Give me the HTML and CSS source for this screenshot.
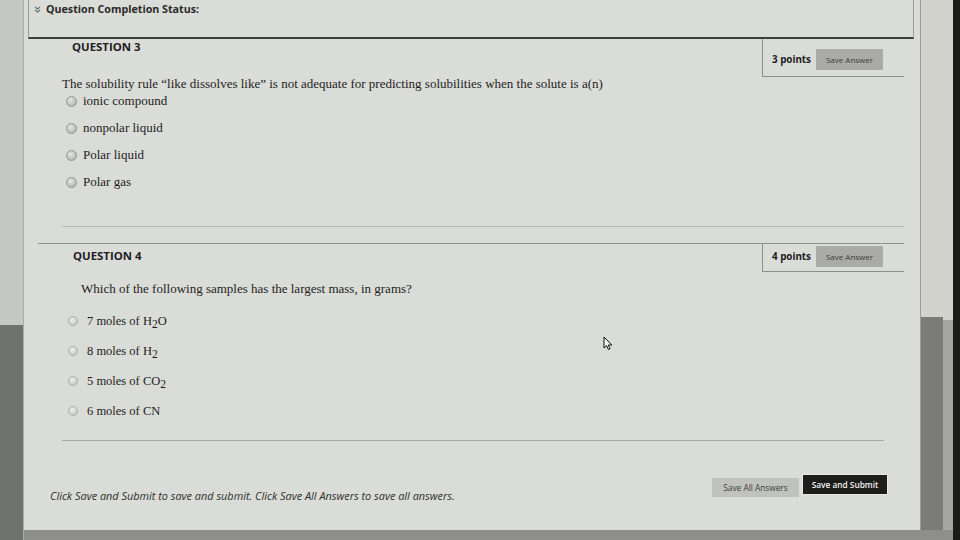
FILE: index.html
```html
<!DOCTYPE html>
<html>
<head>
<meta charset="utf-8">
<link rel="stylesheet" href="styles.css">
</head>
<body>
<div class="screen">
  <div class="side-left"></div>
  <div class="page">
    <div class="status">
      <svg class="chev" width="7" height="7" viewBox="0 0 7 7"><path d="M1 1 L3.5 3 L6 1 M1 4 L3.5 6 L6 4" fill="none" stroke="#6d6f6c" stroke-width="1.1"/></svg>
      <span>Question Completion Status:</span>
    </div>

    <section class="q3">
      <div class="head">
        <h2 class="qtitle">QUESTION 3</h2>
        <div class="pts">
          <span class="pts-label">3 points</span>
          <button class="save">Save Answer</button>
        </div>
      </div>
      <p class="qtext">The solubility rule “like dissolves like” is not adequate for predicting solubilities when the solute is a(n)</p>
      <ul class="opts">
        <li><span class="radio"></span><span class="lbl">ionic compound</span></li>
        <li><span class="radio"></span><span class="lbl">nonpolar liquid</span></li>
        <li><span class="radio"></span><span class="lbl">Polar liquid</span></li>
        <li><span class="radio"></span><span class="lbl">Polar gas</span></li>
      </ul>
    </section>

    <div class="sep-light"></div>

    <section class="q4">
      <div class="head">
        <h2 class="qtitle">QUESTION 4</h2>
        <div class="pts">
          <span class="pts-label">4 points</span>
          <button class="save">Save Answer</button>
        </div>
      </div>
      <p class="qtext">Which of the following samples has the largest mass, in grams?</p>
      <ul class="opts">
        <li><span class="radio"></span><span class="lbl">7 moles of H<sub>2</sub>O</span></li>
        <li><span class="radio"></span><span class="lbl">8 moles of H<sub>2</sub></span></li>
        <li><span class="radio"></span><span class="lbl">5 moles of CO<sub>2</sub></span></li>
        <li><span class="radio"></span><span class="lbl">6 moles of CN</span></li>
      </ul>
    </section>

    <div class="sep-bottom"></div>

    <footer class="foot">
      <p class="hint">Click Save and Submit to save and submit. Click Save All Answers to save all answers.</p>
      <div class="actions">
        <button class="save-all">Save All Answers</button>
        <button class="submit">Save and Submit</button>
      </div>
    </footer>

    <svg class="cursor" width="10" height="15" viewBox="0 0 10 15"><path d="M1 1 L1 12 L3.6 9.6 L5.4 13.6 L7 12.9 L5.3 9 L8.8 9 Z" fill="#f4f4f2" stroke="#111" stroke-width="1"/></svg>
  </div>
  <div class="scroll"></div>
  <div class="track"></div>
  <div class="bezel"></div>
</div>
</body>
</html>
```

FILE: styles.css
```css
* { box-sizing: border-box; }
html, body { margin: 0; padding: 0; }
body {
  width: 960px;
  height: 540px;
  overflow: hidden;
  background: #8e8f8a;
  font-family: "Open Sans", "Liberation Sans", sans-serif;
  color: #222;
}
.screen {
  display: flex;
  width: 960px;
  height: 540px;
}
.side-left {
  width: 24px;
  flex: none;
  background: linear-gradient(to bottom, #c4c7c3 0, #c4c7c3 325px, #6e7370 325px, #6e7370 100%);
  border-right: 1px solid #a9aca8;
}
.page {
  position: relative;
  width: 897px;
  height: 530px;
  flex: none;
  background: #dadcd8;
  border-right: 1px solid #9c9d98;
}
.scroll {
  width: 22px;
  flex: none;
  background: linear-gradient(to bottom, #d3d3cd 0, #d3d3cd 317px, #7b7c77 317px, #7b7c77 530px, #8e8f8a 530px);
}
.track {
  width: 10px;
  flex: none;
  background: linear-gradient(to bottom, #d3d3cd 0, #d3d3cd 320px, #a7a6a0 320px, #a7a6a0 530px, #8e8f8a 530px);
}
.bezel {
  width: 7px;
  flex: none;
  background: #1b1b19;
}

/* status box */
.status {
  height: 39px;
  margin: 0 6px 0 4px;
  border-left: 1px solid #9b9d99;
  border-right: 1px solid #9b9d99;
  border-bottom: 2px solid #3f403e;
  padding: 2px 0 0 5px;
  display: flex;
  align-items: flex-start;
  gap: 5px;
  font-size: 10.7px;
  font-weight: 700;
  line-height: 14px;
  color: #2a2b2a;
}
.chev { margin-top: 4px; }

/* question heads */
.head {
  display: flex;
  align-items: flex-start;
}
.qtitle {
  margin: 0;
  font-size: 11.4px;
  font-weight: 700;
  line-height: 14px;
  color: #1f201f;
}
.pts {
  margin-left: auto;
  display: flex;
  align-items: center;
  border-left: 1px solid #8d8f8b;
  border-bottom: 1px solid #8d8f8b;
  width: 142px;
  padding-left: 9px;
}
.pts-label {
  font-size: 9.8px;
  font-weight: 700;
  color: #1c1c1c;
  width: 44px;
}
.save {
  width: 67px;
  height: 21px;
  border: none;
  padding: 0;
  background: #aaaba7;
  color: #3a3b3a;
  font-family: "Open Sans", "Liberation Sans", sans-serif;
  font-size: 8px;
}

.q3 .head { margin-right: 16px; }
.q3 .qtitle { margin-left: 48px; padding-top: 1px; }
.q3 .pts { height: 38px; padding-top: 4px; }

.qtext {
  margin: 0;
  font-family: "Liberation Serif", "Times New Roman", serif;
  font-size: 13px;
  line-height: 14px;
  color: #1e1e1e;
  white-space: nowrap;
}
.q3 .qtext { margin-left: 38px; }

.opts {
  list-style: none;
  margin: 0;
  padding: 0;
  display: flex;
  flex-direction: column;
  font-family: "Liberation Serif", "Times New Roman", serif;
  font-size: 12.5px;
  line-height: 14px;
  color: #1e1e1e;
}
.opts li {
  display: flex;
  align-items: center;
  height: 14px;
  white-space: nowrap;
}
.lbl { display: inline-block; line-height: 14px; }
.opts sub {
  font-size: 11.5px;
  line-height: 0;
  vertical-align: -3px;
}
.radio {
  width: 11px;
  height: 11px;
  border-radius: 50%;
  border: 1px solid #95978f;
  background: radial-gradient(circle at 40% 35%, #e6e7e4 0, #bfc1be 60%, #a3a5a2 100%);
  margin-right: 6px;
  flex: none;
}
.q3 .opts { margin: 3px 0 0 42px; gap: 13px; font-size: 13px; }

.sep-light {
  margin: 37px 16px 0 38px;
  border-top: 1px solid #b6b8b4;
}

/* question 4 */
.q4 {
  margin: 16px 16px 0 14px;
  border-top: 1px solid #8f918d;
}
.q4 .qtitle { margin-left: 35px; padding-top: 5px; }
.q4 .pts { height: 28px; padding-bottom: 3px; }
.q4 .qtext { margin: 10px 0 0 43px; }
.q4 .opts { margin: 18px 0 0 30px; gap: 16px; }
.q4 .radio { width: 10px; height: 10px; border-color: #aeb0ad; background: radial-gradient(circle at 40% 35%, #eeefed 0, #cfd1ce 60%, #b5b7b4 100%); margin-right: 9px; }

.sep-bottom {
  margin: 22px 36px 0 38px;
  border-top: 1px solid #a9aba7;
}

/* footer */
.foot {
  display: flex;
  align-items: flex-start;
  padding-left: 26px;
  margin-right: 32px;
}
.hint {
  margin: 48px 0 0 0;
  font-size: 10.9px;
  font-style: italic;
  line-height: 14px;
  color: #2f302f;
  white-space: nowrap;
}
.actions {
  margin-left: auto;
  display: flex;
  align-items: flex-start;
  gap: 3px;
}
.save-all {
  margin-top: 37px;
  width: 87px;
  height: 19px;
  border: none;
  padding: 0;
  background: #c0c2be;
  color: #3c3d3c;
  font-family: "Open Sans", "Liberation Sans", sans-serif;
  font-size: 8.3px;
}
.submit {
  margin-top: 33px;
  width: 86px;
  height: 21px;
  border: 1px solid #e8e8e4;
  padding: 0;
  background: #1d1d1c;
  color: #f2f2ef;
  font-family: "Open Sans", "Liberation Sans", sans-serif;
  font-size: 8.3px;
  font-weight: 600;
}

.cursor {
  position: absolute;
  left: 579px;
  top: 336px;
}
```
